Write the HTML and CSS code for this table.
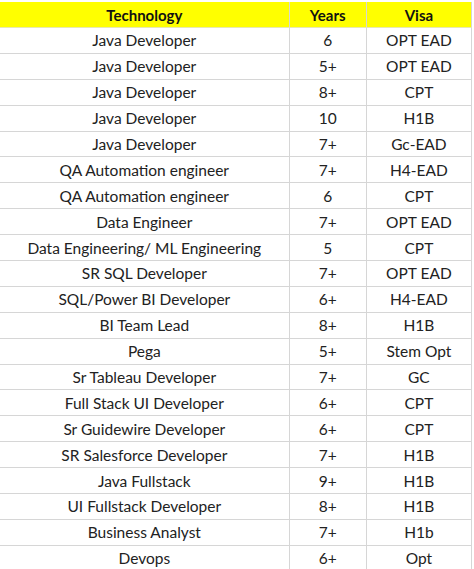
FILE: index.html
```html
<!DOCTYPE html>
<html>
<head>
<meta charset="utf-8">
<link rel="stylesheet" href="styles.css">
</head>
<body>
<table class="grid">
<thead>
<tr class="head"><th class="c1">Technology</th><th class="c2">Years</th><th class="c3">Visa</th></tr>
</thead>
<tbody>
<tr><td>Java Developer</td><td>6</td><td>OPT EAD</td></tr>
<tr><td>Java Developer</td><td>5+</td><td>OPT EAD</td></tr>
<tr><td>Java Developer</td><td>8+</td><td>CPT</td></tr>
<tr><td>Java Developer</td><td>10</td><td>H1B</td></tr>
<tr><td>Java Developer</td><td>7+</td><td>Gc-EAD</td></tr>
<tr><td>QA Automation engineer</td><td>7+</td><td>H4-EAD</td></tr>
<tr><td>QA Automation engineer</td><td>6</td><td>CPT</td></tr>
<tr><td>Data Engineer</td><td>7+</td><td>OPT EAD</td></tr>
<tr><td>Data Engineering/ ML Engineering</td><td>5</td><td>CPT</td></tr>
<tr><td>SR SQL Developer</td><td>7+</td><td>OPT EAD</td></tr>
<tr><td>SQL/Power BI Developer</td><td>6+</td><td>H4-EAD</td></tr>
<tr><td>BI Team Lead</td><td>8+</td><td>H1B</td></tr>
<tr><td>Pega</td><td>5+</td><td>Stem Opt</td></tr>
<tr><td>Sr Tableau Developer</td><td>7+</td><td>GC</td></tr>
<tr><td>Full Stack UI Developer</td><td>6+</td><td>CPT</td></tr>
<tr><td>Sr Guidewire Developer</td><td>6+</td><td>CPT</td></tr>
<tr><td>SR Salesforce Developer</td><td>7+</td><td>H1B</td></tr>
<tr><td>Java Fullstack</td><td>9+</td><td>H1B</td></tr>
<tr><td>UI Fullstack Developer</td><td>8+</td><td>H1B</td></tr>
<tr><td>Business Analyst</td><td>7+</td><td>H1b</td></tr>
<tr><td>Devops</td><td>6+</td><td>Opt</td></tr>
</tbody>
</table>
</body>
</html>
```
FILE: styles.css
```css
html, body {
  margin: 0;
  padding: 0;
  background: #ffffff;
}
body {
  padding-top: 2px;
  font-family: "Lato", "Liberation Sans", sans-serif;
  color: #222222;
}
.grid {
  border-collapse: collapse;
  table-layout: fixed;
  width: 472px;
}
.grid th,
.grid td {
  padding: 0;
  text-align: center;
  vertical-align: middle;
  white-space: nowrap;
  border-right: 1px solid #d6d6d6;
  border-bottom: 1px solid #d6d6d6;
}
.grid th {
  background: #ffff00;
  font-weight: 700;
  font-size: 15px;
  color: #111111;
  height: 25px;
  border-bottom-color: #e8e8b0;
}
.grid td {
  font-size: 15.5px;
  height: 24.9px;
}
.c1 { width: 288px; }
.c2 { width: 76px; }
.c3 { width: 104px; }
```
